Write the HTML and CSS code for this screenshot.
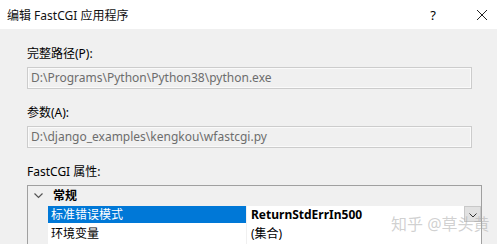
FILE: index.html
```html
<!DOCTYPE html>
<html lang="zh-CN">
<head>
    <meta charset="UTF-8">
    <title>编辑 FastCGI 应用程序</title>
    <link rel="stylesheet" href="styles.css">
</head>
<body>
    <div class="titlebar">
        <span class="title">编辑 FastCGI 应用程序</span>
        <span class="help">?</span>
        <span class="close">
            <svg width="12" height="12" viewBox="0 0 12 12"><path d="M1 1L11 11M11 1L1 11" stroke="#222" stroke-width="1"/></svg>
        </span>
    </div>
    <div class="content">
        <div class="field">
            <label>完整路径(P):</label>
            <div class="textbox">D:\Programs\Python\Python38\python.exe</div>
        </div>
        <div class="field">
            <label>参数(A):</label>
            <div class="textbox">D:\django_examples\kengkou\wfastcgi.py</div>
        </div>
        <label class="grid-label">FastCGI 属性:</label>
        <div class="propgrid">
            <div class="row category">
                <span class="gutter">
                    <svg width="9" height="6" viewBox="0 0 9 6"><path d="M0.5 0.5L4.5 4.5L8.5 0.5" stroke="#555" stroke-width="1.2" fill="none"/></svg>
                </span>
                <span class="cat-name">常规</span>
            </div>
            <div class="row selected">
                <span class="gutter"></span>
                <span class="name">标准错误模式</span>
                <span class="value bold">ReturnStdErrIn500
                    <span class="dropbtn">
                        <svg width="8" height="5" viewBox="0 0 8 5"><path d="M0.5 0.5L4 4L7.5 0.5" stroke="#333" stroke-width="1" fill="none"/></svg>
                    </span>
                </span>
            </div>
            <div class="row last">
                <span class="gutter"></span>
                <span class="name">环境变量</span>
                <span class="value">(集合)</span>
            </div>
        </div>
    </div>
    <div class="watermark">知乎 @草头黄</div>
</body>
</html>
```
FILE: styles.css
```css
body {
    margin: 0;
    width: 497px;
    height: 244px;
    overflow: hidden;
    background-color: #f0f0f0;
    font-family: "Noto Sans", "Noto Sans CJK SC", sans-serif;
    font-size: 12px;
    color: #000;
    position: relative;
}
.titlebar {
    height: 29px;
    background-color: #fff;
    display: flex;
    align-items: center;
    padding-left: 7px;
}
.title {
    flex: 1;
    color: #111;
}
.help {
    width: 20px;
    margin-right: 33px;
    text-align: center;
    font-size: 13px;
}
.close {
    width: 12px;
    margin-right: 9px;
    display: flex;
}
.content {
    padding: 17px 15px 0 27px;
}
.field {
    margin-right: 10px;
    margin-bottom: 16px;
}
label {
    display: block;
    line-height: 16px;
    margin-bottom: 5px;
}
.textbox {
    height: 20px;
    line-height: 20px;
    border: 1px solid #cccccc;
    box-shadow: inset 0 0 0 1px #fafafa;
    padding-left: 3px;
    color: #6d6d6d;
    white-space: nowrap;
    overflow: hidden;
}
.propgrid {
    border: 1px solid #a0a0a0;
    border-bottom: none;
    background-color: #f0f0f0;
}
.row {
    display: flex;
    height: 17px;
    line-height: 17px;
}
.row.category {
    height: 20px;
    line-height: 20px;
}
.row.last {
    height: 21px;
    line-height: 21px;
}
.gutter {
    width: 20px;
    display: flex;
    align-items: center;
    justify-content: center;
}
.cat-name {
    font-weight: bold;
    padding-left: 5px;
}
.name {
    width: 195px;
    padding-left: 3px;
    background-color: #fff;
}
.value {
    flex: 1;
    padding-left: 4px;
    background-color: #fff;
    border-left: 1px solid #f0f0f0;
    position: relative;
}
.bold {
    font-weight: bold;
}
.selected .name {
    background-color: #0078d7;
    color: #fff;
}
.dropbtn {
    position: absolute;
    right: 0;
    top: 0;
    width: 17px;
    height: 16px;
    background-color: #e1e1e1;
    border: 1px solid #c8c8c8;
    box-sizing: border-box;
    display: flex;
    align-items: flex-end;
    justify-content: center;
    padding-bottom: 3px;
}
.watermark {
    position: absolute;
    left: 391px;
    top: 211px;
    font-size: 16px;
    white-space: nowrap;
    color: rgba(170, 170, 170, 0.55);
}
```
